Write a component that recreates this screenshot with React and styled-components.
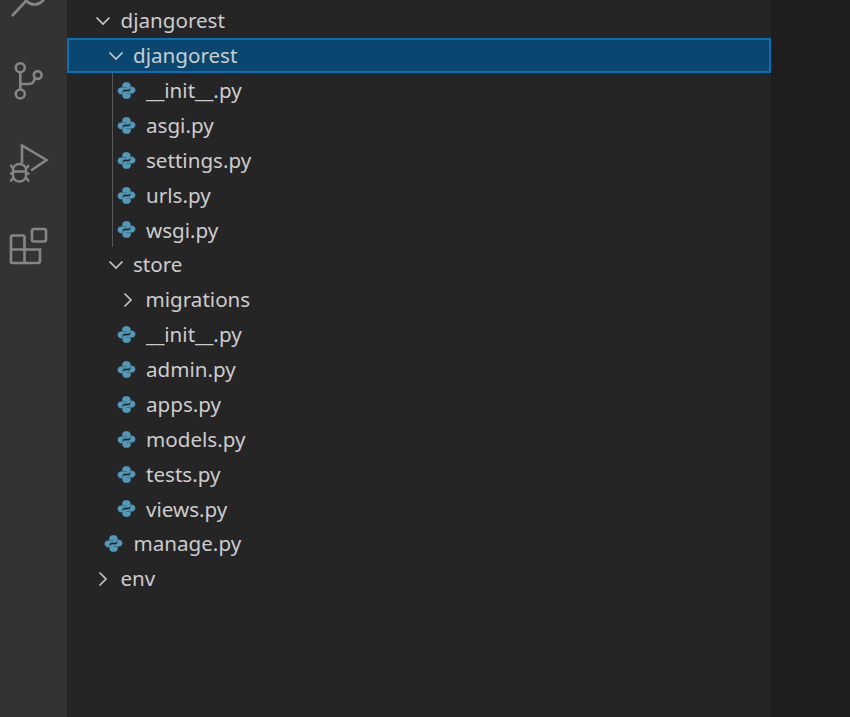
import styled, { createGlobalStyle } from "styled-components";

const GlobalStyle = createGlobalStyle`
  html, body {
    margin: 0;
    padding: 0;
    height: 100%;
    background: #1e1e1e;
  }
  #root {
    height: 100%;
  }
`
const Workbench = styled.main`
  display: flex;
  width: 850px;
  height: 717px;
  overflow: hidden;
  font-family: "Noto Sans", sans-serif;
  background: #1e1e1e;
`
const ActivityBar = styled.nav`
  display: flex;
  flex-direction: column;
  flex: 0 0 67px;
  background: #333333;
`
const ActivityIcon = styled.svg`
  display: block;
  flex: none;
  width: 67px;
  height: ${(props) => props.$h}px;
  fill: none;
  stroke: #858585;
  stroke-width: 2.6;
  filter: blur(0.4px);
`
const SideBar = styled.section`
  flex: 0 0 704px;
  padding-top: 3.2px;
  background: #252526;
`
const Row = styled.div`
  position: relative;
  display: flex;
  align-items: center;
  box-sizing: border-box;
  height: 34.88px;
  padding-left: ${(props) => 27 + props.$depth * 12.5}px;
  color: #cccccc;
  font-size: 20.6px;
  background: ${(props) => (props.$selected ? "#094771" : "transparent")};
  outline: ${(props) => (props.$selected ? "2px solid #0a6fb8" : "none")};
  outline-offset: -2px;
`
const Guide = styled.span`
  position: absolute;
  top: 0;
  bottom: 0;
  left: 44.5px;
  width: 1.5px;
  background: #585858;
`
const Twistie = styled.svg`
  flex: none;
  width: 18px;
  height: 18px;
  fill: none;
  stroke: #c5c5c5;
  stroke-width: 1.7;
  filter: blur(0.3px);
`
const FileIcon = styled.svg`
  flex: none;
  width: 19px;
  height: 19px;
  margin-left: -2.5px;
  fill: #519aba;
  stroke: #519aba;
  stroke-width: 0.7;
  filter: blur(0.5px);
`
const Label = styled.span`
  margin-left: ${(props) => props.$gap}px;
  line-height: 1;
  white-space: nowrap;
`

const tree = [
  { name: "djangorest", depth: 0, open: true },
  { name: "djangorest", depth: 1, open: true, selected: true },
  { name: "__init__.py", depth: 2, guide: true },
  { name: "asgi.py", depth: 2, guide: true },
  { name: "settings.py", depth: 2, guide: true },
  { name: "urls.py", depth: 2, guide: true },
  { name: "wsgi.py", depth: 2, guide: true },
  { name: "store", depth: 1, open: true },
  { name: "migrations", depth: 2, open: false },
  { name: "__init__.py", depth: 2 },
  { name: "admin.py", depth: 2 },
  { name: "apps.py", depth: 2 },
  { name: "models.py", depth: 2 },
  { name: "tests.py", depth: 2 },
  { name: "views.py", depth: 2 },
  { name: "manage.py", depth: 1 },
  { name: "env", depth: 0, open: false },
];

const Chevron = ({ open }) => (
  <Twistie viewBox="0 0 18 18">
    {open ? <path d="M2.5 5.5 9 12l6.500-6.500" /> : <path d="M5.500 2.500 12 9l-6.500 6.500" />}
  </Twistie>
);

const PythonIcon = () => (
  <FileIcon viewBox="0 0 20 20">
    <path d="M9.900 1.500C7 1.500 5.900 2.700 5.900 4.500V6.200h4.300v1H4.100C2.200 7.200 1 8.500 1 10.300c0 2 1.200 3.400 3 3.400h1.500v-2c0-1.700 1.300-3 3-3h3.300c1.200 0 2.200-1 2.200-2.200V4.500c0-1.800-1.500-3-4.100-3z" />
    <path d="M10.100 18.500c2.900 0 4-1.200 4-3v-1.700H9.800v-1h6.100c1.900 0 3.100-1.300 3.100-3.100 0-2-1.200-3.400-3-3.400h-1.500v2c0 1.700-1.300 3-3 3H8.200C7 11.300 6 12.300 6 13.500v2c0 1.800 1.500 3 4.100 3z" />
  </FileIcon>
);

const App = () => {
  return (
    <Workbench>
      <GlobalStyle />
      <ActivityBar>
        <ActivityIcon $h={52} viewBox="0 0 67 52">
          <circle cx="34.500" cy="-6.500" r="11" />
          <path d="M25.500 1.500 12 16" />
        </ActivityIcon>
        <ActivityIcon $h={64} viewBox="0 52 67 64">
          <circle cx="20.300" cy="67.700" r="4.500" />
          <circle cx="37.700" cy="75" r="3.900" />
          <circle cx="20.300" cy="94" r="4.500" />
          <path d="M20.300 72v17.500M20.300 84h8.700c3 0 5-1.500 6-6" />
        </ActivityIcon>
        <ActivityIcon $h={76} viewBox="0 116 67 76">
          <path d="M22 163v-17.500l24.500 14.500-15.500 10.500" />
          <path d="M13 170c0-3.500 3-6 6.500-6s6.500 2.500 6.500 6v5.500c0 3.500-3 6-6.500 6s-6.500-2.500-6.500-6zM13 171.500h13M10.500 165l3 4M29 165l-3 4M10 173.500h3M26 173.500h3.500M10.500 181.500l3-4M29 181.500l-3-4" strokeWidth="2.400" />
        </ActivityIcon>
        <ActivityIcon $h={84} viewBox="0 192 67 84">
          <rect x="32" y="229" width="14" height="12.500" rx="2" />
          <path d="M24.500 235.500H13a2 2 0 0 0-2 2v24.500a1 1 0 0 0 1 1h26a2 2 0 0 0 2-2v-11.500H11M24.500 235.500v27.500" />
        </ActivityIcon>
      </ActivityBar>
      <SideBar>
        {tree.map((item, i) => {
          const isFolder = item.open !== undefined;
          return (
            <Row key={i} $depth={item.depth} $selected={item.selected}>
              {item.guide && <Guide />}
              {isFolder ? <Chevron open={item.open} /> : <PythonIcon />}
              <Label $gap={isFolder ? 8.5 : 10.5}>{item.name}</Label>
            </Row>
          );
        })}
      </SideBar>
    </Workbench>
  );
};

export default App;
